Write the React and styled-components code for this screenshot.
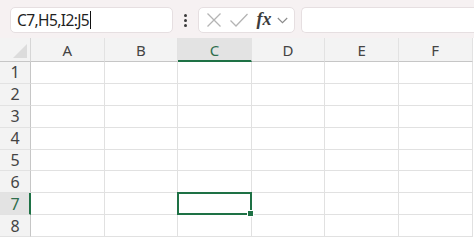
import React from "react";
import styled, { createGlobalStyle } from "styled-components";

const Global = createGlobalStyle`
  html, body { margin: 0; padding: 0; background: #ffffff; overflow: hidden; }
  body { font-family: "Noto Sans", "Open Sans", sans-serif; }
`;

const Page = styled.div`
  width: 474px;
  height: 237px;
  overflow: hidden;
  display: flex;
  flex-direction: column;
`;

const Toolbar = styled.div`
  flex-shrink: 0;
  height: 38px;
  box-sizing: border-box;
  padding: 7px 0 0 10px;
  background: #f6f1f2;
  display: flex;
  align-items: flex-start;
`;

const NameBox = styled.div`
  width: 163px;
  height: 26px;
  box-sizing: border-box;
  background: #ffffff;
  border: 1px solid #e6dfe1;
  border-radius: 5px;
  display: flex;
  align-items: center;
  padding-left: 6px;
  font-size: 15.5px;
  color: #1f1f1f;
  letter-spacing: -0.6px;
`;

const Caret = styled.span`
  display: inline-block;
  width: 1px;
  height: 18px;
  background: #111;
  margin-left: 1px;
`;

const Kebab = styled.div`
  width: 25px;
  height: 26px;
  display: flex;
  flex-direction: column;
  align-items: center;
  justify-content: center;
  gap: 2px;
  & > span {
    width: 3px;
    height: 3px;
    border-radius: 50%;
    background: #3a3a3a;
  }
`;

const FxGroup = styled.div`
  width: 97px;
  height: 26px;
  box-sizing: border-box;
  background: #ffffff;
  border: 1px solid #e6dfe1;
  border-radius: 5px;
  display: flex;
  align-items: center;
  padding-left: 4px;
`;

const IconSlot = styled.div`
  width: ${(p) => p.w}px;
  height: 24px;
  display: flex;
  align-items: center;
  justify-content: center;
`;

const Fx = styled.span`
  font-family: "Liberation Serif", "DejaVu Serif", serif;
  font-style: italic;
  font-weight: bold;
  font-size: 18px;
  color: #3c3c3c;
  line-height: 1;
  margin-top: -2px;
`;

const FormulaInput = styled.div`
  flex: 1;
  margin-left: 6px;
  height: 26px;
  box-sizing: border-box;
  background: #ffffff;
  border: 1px solid #e6dfe1;
  border-right: none;
  border-radius: 5px 0 0 5px;
`;

const Grid = styled.div`
  flex-shrink: 0;
  display: grid;
  grid-template-columns: 31px repeat(6, 73.6px);
  grid-template-rows: 24px repeat(8, 21.9px);
`;

const Corner = styled.div`
  background: #f3f3f3;
  border-right: 1px solid #d6d6d6;
  border-bottom: 1px solid #c6c6c6;
  box-sizing: border-box;
  display: flex;
  align-items: flex-end;
  justify-content: flex-end;
  padding: 0 3px 3px 0;
`;

const ColHead = styled.div`
  box-sizing: border-box;
  background: ${(p) => (p.active ? "#e3e3e3" : "#f3f3f3")};
  border-right: 1px solid ${(p) => (p.active ? "#e3e3e3" : "#e2e2e2")};
  border-bottom: ${(p) => (p.active ? "2px solid #1e7145" : "1px solid #c6c6c6")};
  color: ${(p) => (p.active ? "#2f6e4c" : "#444444")};
  font-size: 15px;
  display: flex;
  align-items: center;
  justify-content: center;
  padding-top: ${(p) => (p.active ? "1px" : "0")};
`;

const RowHead = styled.div`
  box-sizing: border-box;
  background: ${(p) => (p.active ? "#e3e3e3" : "#f3f3f3")};
  border-right: ${(p) => (p.active ? "2px solid #1e7145" : "1px solid #c6c6c6")};
  border-bottom: 1px solid #e2e2e2;
  color: ${(p) => (p.active ? "#2f6e4c" : "#444444")};
  font-size: 16px;
  display: flex;
  align-items: center;
  justify-content: center;
  padding-left: ${(p) => (p.active ? "1px" : "0")};
`;

const Cell = styled.div`
  position: relative;
  box-sizing: border-box;
  border-right: 1px solid #e1e1e1;
  border-bottom: 1px solid #e1e1e1;
  background: #ffffff;
`;

const Selection = styled.div`
  position: absolute;
  left: -1px;
  top: -1px;
  right: -1px;
  bottom: -1px;
  border: 2px solid #1e7145;
  box-sizing: border-box;
  z-index: 2;
`;

const Handle = styled.div`
  position: absolute;
  right: -4px;
  bottom: -4px;
  width: 5px;
  height: 5px;
  background: #1e7145;
  border: 1px solid #ffffff;
`;

const cols = ["A", "B", "C", "D", "E", "F"];
const rows = [1, 2, 3, 4, 5, 6, 7, 8];

export default function App() {
  return (
    <Page>
      <Global />
      <Toolbar>
        <NameBox>
          C7,H5,I2:J5
          <Caret />
        </NameBox>
        <Kebab>
          <span />
          <span />
          <span />
        </Kebab>
        <FxGroup>
          <IconSlot w={22}>
            <svg width="16" height="16" viewBox="0 0 16 16">
              <path d="M1.5 1.5 L14.5 14.5 M14.5 1.5 L1.5 14.5" stroke="#b4b4b4" strokeWidth="1.3" fill="none" />
            </svg>
          </IconSlot>
          <IconSlot w={28}>
            <svg width="20" height="16" viewBox="0 0 20 16">
              <path d="M1.5 8.5 L7 14 L18.5 2" stroke="#b4b4b4" strokeWidth="1.3" fill="none" />
            </svg>
          </IconSlot>
          <IconSlot w={22}>
            <Fx>fx</Fx>
          </IconSlot>
          <IconSlot w={14}>
            <svg width="11" height="7" viewBox="0 0 11 7">
              <path d="M0.8 1 L5.5 5.7 L10.2 1" stroke="#8a8a8a" strokeWidth="1.1" fill="none" />
            </svg>
          </IconSlot>
        </FxGroup>
        <FormulaInput />
      </Toolbar>
      <Grid>
        <Corner>
          <svg width="14" height="14" viewBox="0 0 14 14">
            <path d="M14 0 L14 14 L0 14 Z" fill="#dcdcdc" />
          </svg>
        </Corner>
        {cols.map((c) => (
          <ColHead key={c} active={c === "C"}>
            {c}
          </ColHead>
        ))}
        {rows.map((r) => (
          <React.Fragment key={r}>
            <RowHead active={r === 7}>{r}</RowHead>
            {cols.map((c) => (
              <Cell key={c}>
                {r === 7 && c === "C" && (
                  <Selection>
                    <Handle />
                  </Selection>
                )}
              </Cell>
            ))}
          </React.Fragment>
        ))}
      </Grid>
    </Page>
  );
}
